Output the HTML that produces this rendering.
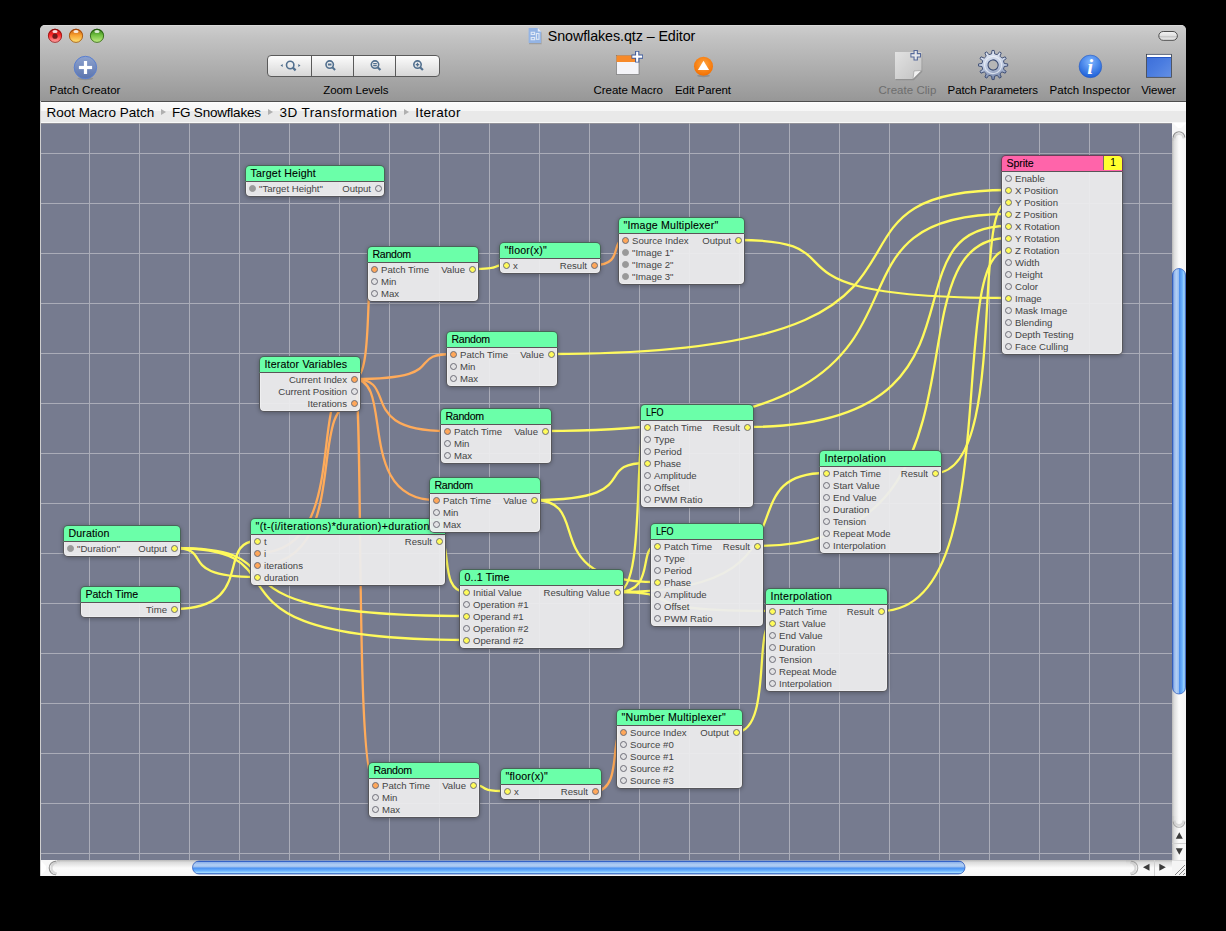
<!DOCTYPE html><html><head><meta charset="utf-8"><style>
*{margin:0;padding:0;box-sizing:border-box}
html,body{width:1226px;height:931px;overflow:hidden;background:#000;font-family:"Liberation Sans", sans-serif}
.win{position:absolute;left:40px;top:25px;width:1146px;height:851px;border-radius:5px 5px 0 0;overflow:hidden;background:#bdbdbd}
.tb{position:absolute;left:0;top:0;width:1146px;height:76px;background:linear-gradient(#e6e6e6 0px,#cdcdcd 1px,#c3c3c3 12px,#a9a9a9 50px,#979797 76px);border-bottom:0}
.tbl{position:absolute;left:0;top:76px;width:1146px;height:1px;background:#4e4e4e}
.bc{position:absolute;left:0;top:77px;width:1146px;height:21px;background:linear-gradient(#ffffff 0,#fafafa 2px,#f6f6f6 9px,#e9e9e9 9px,#e9e9e9 20px,#f8f8f8 20px)}
.bct{position:absolute;top:3px;font-size:13.5px;color:#000;white-space:nowrap;line-height:16px}
.arr{position:absolute;top:7px;width:0;height:0;border-left:5px solid #b0b0b0;border-top:3.5px solid transparent;border-bottom:3.5px solid transparent}
.cv{position:absolute;left:1px;top:98px;width:1131px;height:737px;background:#767b8f;overflow:hidden}
.pt{position:absolute;border-radius:5px;box-shadow:0 1px 4px rgba(0,0,0,.28);}
.hd{position:absolute;left:0;top:0;right:0;height:17px;border-radius:5px 5px 0 0;border:1px solid rgba(60,50,60,.75);border-bottom:1px solid #5a5458}
.hd span{position:absolute;left:4.5px;top:1px;font-size:10.6px;line-height:13px;color:#000;white-space:nowrap;-webkit-text-stroke:0.1px #000}
.bd{position:absolute;right:0;top:0;width:19px;height:14px;background:#ffff2e;border-left:1px solid #77705a;border-radius:0 4px 0 0;font-size:10px;text-align:center;line-height:14px;color:#000}
.bo{position:absolute;left:0;top:17px;right:0;bottom:0;background:rgba(236,236,237,.95);border-radius:0 0 5px 5px;border:1px solid rgba(60,60,66,.85);border-top:0;box-shadow:inset -1px -1px 0 rgba(255,255,255,.3),inset 1px 0 0 rgba(255,255,255,.35)}
.pc{position:absolute;width:7px;height:7px;border-radius:50%;border:1px solid #6e6e78}
.pc.y{background:#fffb5a} .pc.o{background:#ffa75a} .pc.g{background:#999;border-color:#999} .pc.w{background:#e2e2e4}
.pl,.pr{position:absolute;font-weight:normal;font-size:9.6px;line-height:14px;color:#444;white-space:nowrap}
.lbl{position:absolute;top:58px;font-size:11.4px;color:#000;white-space:nowrap;line-height:14px}
.hs{position:absolute;left:1px;top:835px;width:1131px;height:16px;background:linear-gradient(#c4c4c4,#e8e8e8 3px,#fafafa 10px,#f0f0f0 16px)}
.vs{position:absolute;left:1132px;top:98px;width:14px;height:737px;background:linear-gradient(90deg,#c4c4c4,#e8e8e8 3px,#fafafa 9px,#f0f0f0 14px)}
</style></head><body>
<div class="win">
<div class="tb"></div><div class="tbl"></div>

<svg width="1146" height="76" style="position:absolute;left:0;top:0">
 <defs>
  <radialGradient id="gr" cx="50%" cy="35%" r="60%"><stop offset="0" stop-color="#ff8a8a"/><stop offset="1" stop-color="#c81010"/></radialGradient>
  <radialGradient id="go" cx="50%" cy="35%" r="60%"><stop offset="0" stop-color="#ffe27a"/><stop offset="1" stop-color="#d8780c"/></radialGradient>
  <radialGradient id="gg" cx="50%" cy="35%" r="60%"><stop offset="0" stop-color="#c8f08a"/><stop offset="1" stop-color="#3e9a1a"/></radialGradient>
  <linearGradient id="pc" x1="0" y1="0" x2="0" y2="1"><stop offset="0" stop-color="#8ea3cf"/><stop offset="1" stop-color="#5b74ad"/></linearGradient>
  <linearGradient id="seg" x1="0" y1="0" x2="0" y2="1"><stop offset="0" stop-color="#fdfdfd"/><stop offset="1" stop-color="#d6d6d6"/></linearGradient>
  <radialGradient id="ep" cx="50%" cy="40%" r="60%"><stop offset="0" stop-color="#ffa640"/><stop offset="1" stop-color="#f46f00"/></radialGradient>
  <radialGradient id="inf" cx="50%" cy="30%" r="70%"><stop offset="0" stop-color="#7fb6ff"/><stop offset="1" stop-color="#1c5fd8"/></radialGradient>
  <linearGradient id="gear" x1="0" y1="0" x2="0" y2="1"><stop offset="0" stop-color="#e4eaf6"/><stop offset="0.6" stop-color="#b8c4dc"/><stop offset="1" stop-color="#7080a4"/></linearGradient>
  <linearGradient id="gr2" x1="0" y1="0" x2="0" y2="1"><stop offset="0" stop-color="#b01212"/><stop offset="0.45" stop-color="#ff2a2a"/><stop offset="1" stop-color="#ffb0b0"/></linearGradient>
  <linearGradient id="go2" x1="0" y1="0" x2="0" y2="1"><stop offset="0" stop-color="#c0500a"/><stop offset="0.45" stop-color="#f7a030"/><stop offset="1" stop-color="#ffe87a"/></linearGradient>
  <linearGradient id="gg2" x1="0" y1="0" x2="0" y2="1"><stop offset="0" stop-color="#2a7010"/><stop offset="0.45" stop-color="#70c040"/><stop offset="1" stop-color="#c8f08a"/></linearGradient>
 </defs>
 <g transform="translate(15,10.799999999999997)">
  <circle r="7" fill="url(#gr2)"/><circle r="6.6" fill="none" stroke="#7a0a0a" stroke-width="0.9" opacity=".8"/>
  <circle cy="0.4" r="2.6" fill="#6e1a1a"/>
  <ellipse cy="-4.3" rx="2.6" ry="1.5" fill="#fff" opacity=".85"/>
 </g>
 <g transform="translate(36,10.799999999999997)">
  <circle r="7" fill="url(#go2)"/><circle r="6.6" fill="none" stroke="#8a3a05" stroke-width="0.9" opacity=".8"/>
  <ellipse cy="-4.3" rx="2.6" ry="1.5" fill="#fff" opacity=".85"/>
 </g>
 <g transform="translate(57,10.799999999999997)">
  <circle r="7" fill="url(#gg2)"/><circle r="6.6" fill="none" stroke="#1a4a0a" stroke-width="0.9" opacity=".8"/>
  <ellipse cy="-4.3" rx="2.6" ry="1.5" fill="#fff" opacity=".8"/>
 </g>
 <defs><linearGradient id="pill" x1="0" y1="0" x2="0" y2="1"><stop offset="0" stop-color="#f4f4f4"/><stop offset="0.45" stop-color="#e2e2e2"/><stop offset="0.55" stop-color="#c8c8c8"/><stop offset="1" stop-color="#f6f6f6"/></linearGradient></defs>
 <rect x="1118.8" y="6.5" width="18.6" height="8.8" rx="4.4" fill="url(#pill)" stroke="#4e4e4e" stroke-width="1"/>
 <ellipse cx="45.400000000000006" cy="53.599999999999994" rx="8" ry="1.6" fill="#000" opacity=".12"/>
 <circle cx="45.400000000000006" cy="42.5" r="11.2" fill="url(#pc)" stroke="#5a7fd0" stroke-width="1"/>
 <rect x="43.9" y="36.0" width="3.2" height="13" fill="#fff"/>
 <rect x="38.9" y="40.9" width="13.2" height="3.2" fill="#fff"/>
 <rect x="227.5" y="30.5" width="172" height="21" rx="3.5" fill="url(#seg)" stroke="#5a5a5a" stroke-width="1"/>
 <path d="M271.5,30.5V51.5M313.5,30.5V51.5M355.5,30.5V51.5" stroke="#5a5a5a" stroke-width="1"/>
 <g fill="none" stroke="#52708f" stroke-width="1.6">
  <circle cx="250.2" cy="40" r="3.7"/><path d="M252.8,42.599999999999994l2.8,2.8" stroke-width="2.2"/>
  <circle cx="289.7" cy="39.599999999999994" r="3.7"/><path d="M292.3,42.2l2.8,2.8M287.9,39.599999999999994h3.6" stroke-width="2"/>
  <circle cx="335" cy="39.599999999999994" r="3.7"/><path d="M337.6,42.2l2.8,2.8" stroke-width="2.2"/><path d="M333.2,38.6h3.6M333.2,40.599999999999994h3.6" stroke-width="1.1"/>
  <circle cx="377.5" cy="39.599999999999994" r="3.7"/><path d="M380.1,42.2l2.8,2.8" stroke-width="2.2"/><path d="M375.7,39.599999999999994h3.6M377.5,37.8v3.6" stroke-width="1.4"/>
 </g>
 <path d="M240.5,40.5l2.2,-1.6v3.2z M260.5,40.5l-2.2,-1.6v3.2z" fill="#52708f"/>
 <rect x="576.5" y="30.5" width="22.5" height="19" fill="#f4f4f8" stroke="#6a6a6a" stroke-width="0.6"/>
 <rect x="576.5" y="30.5" width="22.5" height="6.5" fill="#f78a2a"/>
 <path d="M597.2,26v11.5M591.5,31.700000000000003h11.5" stroke="#3e5a9a" stroke-width="4.2"/>
 <path d="M597.2,26.799999999999997v9.9M592.3,31.700000000000003h9.9" stroke="#fff" stroke-width="2.2"/>
 <ellipse cx="663.5" cy="50.8" rx="6.5" ry="1.4" fill="#000" opacity=".14"/>
 <circle cx="663.5" cy="41.3" r="9.5" fill="url(#ep)"/>
 <path d="M663.5,35.7 L669.1,45 L657.9,45Z" fill="#fff"/>
 <defs><linearGradient id="pg" x1="0" y1="0" x2="1" y2="1"><stop offset="0" stop-color="#e2e2e2"/><stop offset="1" stop-color="#c2c2c2"/></linearGradient></defs>
 <path d="M855.5,28H882V46L873.5,54.5H855.5Z" fill="#6a6a6a" opacity=".35" transform="translate(0.3,0.8)"/>
 <path d="M855,27H881.5V45.5L873,54H855Z" fill="url(#pg)"/>
 <path d="M881.5,45.5L873,54L874,46Z" fill="#f2f2f2" stroke="#8a8a8a" stroke-width="0.5"/>
 <path d="M875.7,25v10.6M870.4,30.299999999999997h10.6" stroke="#56699a" stroke-width="4.4"/>
 <path d="M875.7,26v8.6M871.4,30.299999999999997h8.6" stroke="#e4e6ea" stroke-width="2.2"/>
 <g transform="translate(953.1,40) rotate(-7.8)">
  <path d="M11.20,0.00 L14.57,0.92 L14.28,3.04 L10.79,3.01 L9.70,5.60 L12.16,8.08 L10.85,9.77 L7.84,8.00 L5.60,9.70 L6.49,13.08 L4.51,13.89 L2.79,10.85 L0.00,11.20 L-0.92,14.57 L-3.04,14.28 L-3.01,10.79 L-5.60,9.70 L-8.08,12.16 L-9.77,10.85 L-8.00,7.84 L-9.70,5.60 L-13.08,6.49 L-13.89,4.51 L-10.85,2.79 L-11.20,0.00 L-14.57,-0.92 L-14.28,-3.04 L-10.79,-3.01 L-9.70,-5.60 L-12.16,-8.08 L-10.85,-9.77 L-7.84,-8.00 L-5.60,-9.70 L-6.49,-13.08 L-4.51,-13.89 L-2.79,-10.85 L-0.00,-11.20 L0.92,-14.57 L3.04,-14.28 L3.01,-10.79 L5.60,-9.70 L8.08,-12.16 L9.77,-10.85 L8.00,-7.84 L9.70,-5.60 L13.08,-6.49 L13.89,-4.51 L10.85,-2.79Z" fill="url(#gear)" stroke="#3e4e74" stroke-width="0.9"/>
  <circle r="8.6" fill="none" stroke="#eef2fa" stroke-width="1.2" opacity=".7"/>
  <circle r="5.1" fill="#b6b6b6" stroke="#3e4e74" stroke-width="1.1"/>
 </g>
 <circle cx="1050.4" cy="41.400000000000006" r="11.3" fill="url(#inf)" stroke="#2a5cc0" stroke-width="0.6"/>
 <text x="1050.2" y="48.8" text-anchor="middle" font-family="Liberation Serif" font-style="italic" font-weight="bold" font-size="21" fill="#fff">i</text>
 <defs><linearGradient id="vw" x1="0" y1="0" x2="1" y2="1"><stop offset="0" stop-color="#3a6cd8"/><stop offset="0.5" stop-color="#4a7ce0"/><stop offset="1" stop-color="#6490e4"/></linearGradient></defs>
 <rect x="1106.5" y="29.299999999999997" width="25" height="23" fill="url(#vw)" stroke="#3a3a3a" stroke-width="0.7"/>
 <rect x="1107" y="29.799999999999997" width="24" height="2.2" fill="#fff"/>
 <rect x="1107" y="32" width="24" height="0.8" fill="#1f4fc0"/>
 <g transform="translate(488.6,3.1000000000000014)">
  <path d="M0.5,15.5 H13 V4 L9.5,0.5 H0.5Z" fill="#7f7f7f" opacity=".5" transform="translate(0,0.6)"/>
  <path d="M0,0 H9.2 L12.5,3.3 V15 H0Z" fill="#94b4e4"/>
  <path d="M9.2,0 L12.5,3.3 H9.2Z" fill="#e8eef8"/>
  <g fill="none" stroke="#dfe8f6" stroke-width="1.1">
   <rect x="2.6" y="4.2" width="3.4" height="2.2"/><rect x="2.6" y="9.4" width="3.4" height="2.2"/><rect x="7.8" y="5.4" width="2.6" height="5.8"/>
  </g>
 </g>
</svg>
<div class="lbl" style="left:9.5px;font-size:11.5px;letter-spacing:-0.004px;color:#000">Patch Creator</div>
<div class="lbl" style="left:283.2px;font-size:11.5px;letter-spacing:-0.043px;color:#000">Zoom Levels</div>
<div class="lbl" style="left:553.5px;font-size:11.5px;letter-spacing:-0.015px;color:#000">Create Macro</div>
<div class="lbl" style="left:635.0px;font-size:11.5px;letter-spacing:-0.089px;color:#000">Edit Parent</div>
<div class="lbl" style="left:838.5px;font-size:11.5px;letter-spacing:0.028px;color:#6e6e6e">Create Clip</div>
<div class="lbl" style="left:907.6px;font-size:11.5px;letter-spacing:-0.109px;color:#000">Patch Parameters</div>
<div class="lbl" style="left:1009.5px;font-size:11.5px;letter-spacing:0.071px;color:#000">Patch Inspector</div>
<div class="lbl" style="left:1101.2px;font-size:11.5px;letter-spacing:-0.069px;color:#000">Viewer</div>
<div style="position:absolute;left:507.8px;top:3px;font-size:14.3px;letter-spacing:-0.086px;line-height:16px;color:#000;white-space:nowrap">Snowflakes.qtz – Editor</div>

<div class="bc"><div class="bct" style="left:6.5px;letter-spacing:-0.023px">Root Macro Patch</div>
<div class="arr" style="left:120.6px"></div>
<div class="bct" style="left:132.0px;letter-spacing:-0.211px">FG Snowflakes</div>
<div class="arr" style="left:227.8px"></div>
<div class="bct" style="left:239.6px;letter-spacing:0.401px">3D Transformation</div>
<div class="arr" style="left:363.8px"></div>
<div class="bct" style="left:375.3px;letter-spacing:0.333px">Iterator</div></div>
<div class="cv">
<svg width="1131" height="737" viewBox="41 123 1131 737" style="position:absolute;left:0;top:0">
<path d="M89.5,123V860M139.5,123V860M189.5,123V860M239.5,123V860M289.5,123V860M339.5,123V860M389.5,123V860M439.5,123V860M489.5,123V860M539.5,123V860M589.5,123V860M639.5,123V860M689.5,123V860M739.5,123V860M789.5,123V860M839.5,123V860M889.5,123V860M939.5,123V860M989.5,123V860M1039.5,123V860M1089.5,123V860M1139.5,123V860M41,153.5H1172M41,203.5H1172M41,253.5H1172M41,303.5H1172M41,353.5H1172M41,403.5H1172M41,453.5H1172M41,503.5H1172M41,553.5H1172M41,603.5H1172M41,653.5H1172M41,703.5H1172M41,753.5H1172M41,803.5H1172M41,853.5H1172" stroke="#aaacb8" stroke-width="1" fill="none"/>
<path d="M354,379 C374.0,379 364.0,269 374,269" stroke="#ffab5a" stroke-width="2.3" fill="none"/>
<path d="M354,379 C453.0,379 403.5,354 453,354" stroke="#ffab5a" stroke-width="2.3" fill="none"/>
<path d="M354,379 C400.5,379 354.0,431 447,431" stroke="#ffab5a" stroke-width="2.3" fill="none"/>
<path d="M354,379 C395.0,379 354.0,500 436,500" stroke="#ffab5a" stroke-width="2.3" fill="none"/>
<path d="M354,379 C364.5,379 354.0,785 375,785" stroke="#ffab5a" stroke-width="2.3" fill="none"/>
<path d="M354,379 C305.5,379 354.0,553 257,553" stroke="#ffab5a" stroke-width="2.3" fill="none"/>
<path d="M354,403 C305.5,403 354.0,565 257,565" stroke="#ffab5a" stroke-width="2.3" fill="none"/>
<path d="M594,265 C625.0,265 609.5,240 625,240" stroke="#ffab5a" stroke-width="2.3" fill="none"/>
<path d="M595,791 C623.0,791 609.0,732 623,732" stroke="#ffab5a" stroke-width="2.3" fill="none"/>
<path d="M472,269 C506.0,269 489.0,265 506,265" stroke="#fffa5c" stroke-width="2.3" fill="none"/>
<path d="M738,240 C873.0,240 738.0,298 1008,298" stroke="#fffa5c" stroke-width="2.3" fill="none"/>
<path d="M551,354 C1008.0,354 779.5,190 1008,190" stroke="#fffa5c" stroke-width="2.3" fill="none"/>
<path d="M545,431 C1008.0,431 776.5,214 1008,214" stroke="#fffa5c" stroke-width="2.3" fill="none"/>
<path d="M534,500 C647.0,500 590.5,463 647,463" stroke="#fffa5c" stroke-width="2.3" fill="none"/>
<path d="M534,500 C595.5,500 534.0,582 657,582" stroke="#fffa5c" stroke-width="2.3" fill="none"/>
<path d="M174,548 C215.5,548 174.0,577 257,577" stroke="#fffa5c" stroke-width="2.3" fill="none"/>
<path d="M174,548 C320.0,548 174.0,616 466,616" stroke="#fffa5c" stroke-width="2.3" fill="none"/>
<path d="M174,548 C320.0,548 174.0,640 466,640" stroke="#fffa5c" stroke-width="2.3" fill="none"/>
<path d="M174,609 C257.0,609 215.5,541 257,541" stroke="#fffa5c" stroke-width="2.3" fill="none"/>
<path d="M439,541 C452.5,541 439.0,592 466,592" stroke="#fffa5c" stroke-width="2.3" fill="none"/>
<path d="M617,592 C647.0,592 632.0,427 647,427" stroke="#fffa5c" stroke-width="2.3" fill="none"/>
<path d="M617,592 C657.0,592 637.0,546 657,546" stroke="#fffa5c" stroke-width="2.3" fill="none"/>
<path d="M617,592 C826.0,592 721.5,473 826,473" stroke="#fffa5c" stroke-width="2.3" fill="none"/>
<path d="M617,592 C694.5,592 617.0,611 772,611" stroke="#fffa5c" stroke-width="2.3" fill="none"/>
<path d="M747,427 C1008.0,427 877.5,226 1008,226" stroke="#fffa5c" stroke-width="2.3" fill="none"/>
<path d="M757,546 C1008.0,546 882.5,238 1008,238" stroke="#fffa5c" stroke-width="2.3" fill="none"/>
<path d="M935,473 C1008.0,473 971.5,202 1008,202" stroke="#fffa5c" stroke-width="2.3" fill="none"/>
<path d="M881,611 C1008.0,611 944.5,250 1008,250" stroke="#fffa5c" stroke-width="2.3" fill="none"/>
<path d="M736,732 C772.0,732 754.0,623 772,623" stroke="#fffa5c" stroke-width="2.3" fill="none"/>
<path d="M473,785 C490.0,785 473.0,791 507,791" stroke="#fffa5c" stroke-width="2.3" fill="none"/>
</svg>
<div style="position:absolute;left:0;top:0;width:1131px;height:1px;background:rgba(165,162,160,.6)"></div>
<div class="pt" style="left:204px;top:42px;width:140px;height:32px"><div class="hd" style="background:#6bffa9"><span style="letter-spacing:0.191px">Target Height</span></div><div class="bo"></div><i class="pc g" style="left:3.5px;top:19.5px"></i><b class="pl" style="left:14px;top:17px">&quot;Target Height&quot;</b><i class="pc w" style="left:129.5px;top:19.5px"></i><b class="pr" style="right:14px;top:17px">Output</b></div>
<div class="pt" style="left:209px;top:395px;width:196px;height:68px"><div class="hd" style="background:#6bffa9"><span style="letter-spacing:0.398px">&quot;(t-(i/iterations)*duration)+duration&quot;</span></div><div class="bo"></div><i class="pc y" style="left:3.5px;top:19.5px"></i><b class="pl" style="left:14px;top:17px">t</b><i class="pc o" style="left:3.5px;top:31.5px"></i><b class="pl" style="left:14px;top:29px">i</b><i class="pc o" style="left:3.5px;top:43.5px"></i><b class="pl" style="left:14px;top:41px">iterations</b><i class="pc y" style="left:3.5px;top:55.5px"></i><b class="pl" style="left:14px;top:53px">duration</b><i class="pc y" style="left:185.5px;top:19.5px"></i><b class="pr" style="right:14px;top:17px">Result</b></div>
<div class="pt" style="left:326px;top:123px;width:112px;height:56px"><div class="hd" style="background:#6bffa9"><span style="letter-spacing:-0.288px">Random</span></div><div class="bo"></div><i class="pc o" style="left:3.5px;top:19.5px"></i><b class="pl" style="left:14px;top:17px">Patch Time</b><i class="pc w" style="left:3.5px;top:31.5px"></i><b class="pl" style="left:14px;top:29px">Min</b><i class="pc w" style="left:3.5px;top:43.5px"></i><b class="pl" style="left:14px;top:41px">Max</b><i class="pc y" style="left:101.5px;top:19.5px"></i><b class="pr" style="right:14px;top:17px">Value</b></div>
<div class="pt" style="left:458px;top:119px;width:102px;height:32px"><div class="hd" style="background:#6bffa9"><span style="letter-spacing:0.202px">&quot;floor(x)&quot;</span></div><div class="bo"></div><i class="pc y" style="left:3.5px;top:19.5px"></i><b class="pl" style="left:14px;top:17px">x</b><i class="pc o" style="left:91.5px;top:19.5px"></i><b class="pr" style="right:14px;top:17px">Result</b></div>
<div class="pt" style="left:577px;top:94px;width:127px;height:68px"><div class="hd" style="background:#6bffa9"><span style="letter-spacing:0.198px">&quot;Image Multiplexer&quot;</span></div><div class="bo"></div><i class="pc o" style="left:3.5px;top:19.5px"></i><b class="pl" style="left:14px;top:17px">Source Index</b><i class="pc g" style="left:3.5px;top:31.5px"></i><b class="pl" style="left:14px;top:29px">&quot;Image 1&quot;</b><i class="pc g" style="left:3.5px;top:43.5px"></i><b class="pl" style="left:14px;top:41px">&quot;Image 2&quot;</b><i class="pc g" style="left:3.5px;top:55.5px"></i><b class="pl" style="left:14px;top:53px">&quot;Image 3&quot;</b><i class="pc y" style="left:116.5px;top:19.5px"></i><b class="pr" style="right:14px;top:17px">Output</b></div>
<div class="pt" style="left:405px;top:208px;width:112px;height:56px"><div class="hd" style="background:#6bffa9"><span style="letter-spacing:-0.288px">Random</span></div><div class="bo"></div><i class="pc o" style="left:3.5px;top:19.5px"></i><b class="pl" style="left:14px;top:17px">Patch Time</b><i class="pc w" style="left:3.5px;top:31.5px"></i><b class="pl" style="left:14px;top:29px">Min</b><i class="pc w" style="left:3.5px;top:43.5px"></i><b class="pl" style="left:14px;top:41px">Max</b><i class="pc y" style="left:101.5px;top:19.5px"></i><b class="pr" style="right:14px;top:17px">Value</b></div>
<div class="pt" style="left:218px;top:233px;width:102px;height:56px"><div class="hd" style="background:#6bffa9"><span style="letter-spacing:0.154px">Iterator Variables</span></div><div class="bo"></div><i class="pc o" style="left:91.5px;top:19.5px"></i><b class="pr" style="right:14px;top:17px">Current Index</b><i class="pc w" style="left:91.5px;top:31.5px"></i><b class="pr" style="right:14px;top:29px">Current Position</b><i class="pc o" style="left:91.5px;top:43.5px"></i><b class="pr" style="right:14px;top:41px">Iterations</b></div>
<div class="pt" style="left:399px;top:285px;width:112px;height:56px"><div class="hd" style="background:#6bffa9"><span style="letter-spacing:-0.288px">Random</span></div><div class="bo"></div><i class="pc o" style="left:3.5px;top:19.5px"></i><b class="pl" style="left:14px;top:17px">Patch Time</b><i class="pc w" style="left:3.5px;top:31.5px"></i><b class="pl" style="left:14px;top:29px">Min</b><i class="pc w" style="left:3.5px;top:43.5px"></i><b class="pl" style="left:14px;top:41px">Max</b><i class="pc y" style="left:101.5px;top:19.5px"></i><b class="pr" style="right:14px;top:17px">Value</b></div>
<div class="pt" style="left:599px;top:281px;width:114px;height:104px"><div class="hd" style="background:#6bffa9"><span style="transform:scaleX(0.854);transform-origin:0 0">LFO</span></div><div class="bo"></div><i class="pc y" style="left:3.5px;top:19.5px"></i><b class="pl" style="left:14px;top:17px">Patch Time</b><i class="pc w" style="left:3.5px;top:31.5px"></i><b class="pl" style="left:14px;top:29px">Type</b><i class="pc w" style="left:3.5px;top:43.5px"></i><b class="pl" style="left:14px;top:41px">Period</b><i class="pc y" style="left:3.5px;top:55.5px"></i><b class="pl" style="left:14px;top:53px">Phase</b><i class="pc w" style="left:3.5px;top:67.5px"></i><b class="pl" style="left:14px;top:65px">Amplitude</b><i class="pc w" style="left:3.5px;top:79.5px"></i><b class="pl" style="left:14px;top:77px">Offset</b><i class="pc w" style="left:3.5px;top:91.5px"></i><b class="pl" style="left:14px;top:89px">PWM Ratio</b><i class="pc y" style="left:103.5px;top:19.5px"></i><b class="pr" style="right:14px;top:17px">Result</b></div>
<div class="pt" style="left:388px;top:354px;width:112px;height:56px"><div class="hd" style="background:#6bffa9"><span style="letter-spacing:-0.288px">Random</span></div><div class="bo"></div><i class="pc o" style="left:3.5px;top:19.5px"></i><b class="pl" style="left:14px;top:17px">Patch Time</b><i class="pc w" style="left:3.5px;top:31.5px"></i><b class="pl" style="left:14px;top:29px">Min</b><i class="pc w" style="left:3.5px;top:43.5px"></i><b class="pl" style="left:14px;top:41px">Max</b><i class="pc y" style="left:101.5px;top:19.5px"></i><b class="pr" style="right:14px;top:17px">Value</b></div>
<div class="pt" style="left:22px;top:402px;width:118px;height:32px"><div class="hd" style="background:#6bffa9"><span style="letter-spacing:0.137px">Duration</span></div><div class="bo"></div><i class="pc g" style="left:3.5px;top:19.5px"></i><b class="pl" style="left:14px;top:17px">&quot;Duration&quot;</b><i class="pc y" style="left:107.5px;top:19.5px"></i><b class="pr" style="right:14px;top:17px">Output</b></div>
<div class="pt" style="left:39px;top:463px;width:101px;height:32px"><div class="hd" style="background:#6bffa9"><span style="letter-spacing:-0.042px">Patch Time</span></div><div class="bo"></div><i class="pc y" style="left:90.5px;top:19.5px"></i><b class="pr" style="right:14px;top:17px">Time</b></div>
<div class="pt" style="left:418px;top:446px;width:165px;height:80px"><div class="hd" style="background:#6bffa9"><span style="letter-spacing:0.155px">0..1 Time</span></div><div class="bo"></div><i class="pc y" style="left:3.5px;top:19.5px"></i><b class="pl" style="left:14px;top:17px">Initial Value</b><i class="pc w" style="left:3.5px;top:31.5px"></i><b class="pl" style="left:14px;top:29px">Operation #1</b><i class="pc y" style="left:3.5px;top:43.5px"></i><b class="pl" style="left:14px;top:41px">Operand #1</b><i class="pc w" style="left:3.5px;top:55.5px"></i><b class="pl" style="left:14px;top:53px">Operation #2</b><i class="pc y" style="left:3.5px;top:67.5px"></i><b class="pl" style="left:14px;top:65px">Operand #2</b><i class="pc y" style="left:154.5px;top:19.5px"></i><b class="pr" style="right:14px;top:17px">Resulting Value</b></div>
<div class="pt" style="left:609px;top:400px;width:114px;height:104px"><div class="hd" style="background:#6bffa9"><span style="transform:scaleX(0.854);transform-origin:0 0">LFO</span></div><div class="bo"></div><i class="pc y" style="left:3.5px;top:19.5px"></i><b class="pl" style="left:14px;top:17px">Patch Time</b><i class="pc w" style="left:3.5px;top:31.5px"></i><b class="pl" style="left:14px;top:29px">Type</b><i class="pc w" style="left:3.5px;top:43.5px"></i><b class="pl" style="left:14px;top:41px">Period</b><i class="pc y" style="left:3.5px;top:55.5px"></i><b class="pl" style="left:14px;top:53px">Phase</b><i class="pc w" style="left:3.5px;top:67.5px"></i><b class="pl" style="left:14px;top:65px">Amplitude</b><i class="pc w" style="left:3.5px;top:79.5px"></i><b class="pl" style="left:14px;top:77px">Offset</b><i class="pc w" style="left:3.5px;top:91.5px"></i><b class="pl" style="left:14px;top:89px">PWM Ratio</b><i class="pc y" style="left:103.5px;top:19.5px"></i><b class="pr" style="right:14px;top:17px">Result</b></div>
<div class="pt" style="left:778px;top:327px;width:123px;height:104px"><div class="hd" style="background:#6bffa9"><span style="letter-spacing:0.266px">Interpolation</span></div><div class="bo"></div><i class="pc y" style="left:3.5px;top:19.5px"></i><b class="pl" style="left:14px;top:17px">Patch Time</b><i class="pc w" style="left:3.5px;top:31.5px"></i><b class="pl" style="left:14px;top:29px">Start Value</b><i class="pc w" style="left:3.5px;top:43.5px"></i><b class="pl" style="left:14px;top:41px">End Value</b><i class="pc w" style="left:3.5px;top:55.5px"></i><b class="pl" style="left:14px;top:53px">Duration</b><i class="pc w" style="left:3.5px;top:67.5px"></i><b class="pl" style="left:14px;top:65px">Tension</b><i class="pc w" style="left:3.5px;top:79.5px"></i><b class="pl" style="left:14px;top:77px">Repeat Mode</b><i class="pc w" style="left:3.5px;top:91.5px"></i><b class="pl" style="left:14px;top:89px">Interpolation</b><i class="pc y" style="left:112.5px;top:19.5px"></i><b class="pr" style="right:14px;top:17px">Result</b></div>
<div class="pt" style="left:724px;top:465px;width:123px;height:104px"><div class="hd" style="background:#6bffa9"><span style="letter-spacing:0.266px">Interpolation</span></div><div class="bo"></div><i class="pc y" style="left:3.5px;top:19.5px"></i><b class="pl" style="left:14px;top:17px">Patch Time</b><i class="pc y" style="left:3.5px;top:31.5px"></i><b class="pl" style="left:14px;top:29px">Start Value</b><i class="pc w" style="left:3.5px;top:43.5px"></i><b class="pl" style="left:14px;top:41px">End Value</b><i class="pc w" style="left:3.5px;top:55.5px"></i><b class="pl" style="left:14px;top:53px">Duration</b><i class="pc w" style="left:3.5px;top:67.5px"></i><b class="pl" style="left:14px;top:65px">Tension</b><i class="pc w" style="left:3.5px;top:79.5px"></i><b class="pl" style="left:14px;top:77px">Repeat Mode</b><i class="pc w" style="left:3.5px;top:91.5px"></i><b class="pl" style="left:14px;top:89px">Interpolation</b><i class="pc y" style="left:112.5px;top:19.5px"></i><b class="pr" style="right:14px;top:17px">Result</b></div>
<div class="pt" style="left:575px;top:586px;width:127px;height:80px"><div class="hd" style="background:#6bffa9"><span style="letter-spacing:0.260px">&quot;Number Multiplexer&quot;</span></div><div class="bo"></div><i class="pc o" style="left:3.5px;top:19.5px"></i><b class="pl" style="left:14px;top:17px">Source Index</b><i class="pc w" style="left:3.5px;top:31.5px"></i><b class="pl" style="left:14px;top:29px">Source #0</b><i class="pc w" style="left:3.5px;top:43.5px"></i><b class="pl" style="left:14px;top:41px">Source #1</b><i class="pc w" style="left:3.5px;top:55.5px"></i><b class="pl" style="left:14px;top:53px">Source #2</b><i class="pc w" style="left:3.5px;top:67.5px"></i><b class="pl" style="left:14px;top:65px">Source #3</b><i class="pc y" style="left:116.5px;top:19.5px"></i><b class="pr" style="right:14px;top:17px">Output</b></div>
<div class="pt" style="left:327px;top:639px;width:112px;height:56px"><div class="hd" style="background:#6bffa9"><span style="letter-spacing:-0.288px">Random</span></div><div class="bo"></div><i class="pc o" style="left:3.5px;top:19.5px"></i><b class="pl" style="left:14px;top:17px">Patch Time</b><i class="pc w" style="left:3.5px;top:31.5px"></i><b class="pl" style="left:14px;top:29px">Min</b><i class="pc w" style="left:3.5px;top:43.5px"></i><b class="pl" style="left:14px;top:41px">Max</b><i class="pc y" style="left:101.5px;top:19.5px"></i><b class="pr" style="right:14px;top:17px">Value</b></div>
<div class="pt" style="left:459px;top:645px;width:102px;height:32px"><div class="hd" style="background:#6bffa9"><span style="letter-spacing:0.202px">&quot;floor(x)&quot;</span></div><div class="bo"></div><i class="pc y" style="left:3.5px;top:19.5px"></i><b class="pl" style="left:14px;top:17px">x</b><i class="pc o" style="left:91.5px;top:19.5px"></i><b class="pr" style="right:14px;top:17px">Result</b></div>
<div class="pt" style="left:960px;top:32px;width:122px;height:200px"><div class="hd" style="background:#ff64aa"><span style="letter-spacing:-0.095px">Sprite</span><div class="bd">1</div></div><div class="bo"></div><i class="pc w" style="left:3.5px;top:19.5px"></i><b class="pl" style="left:14px;top:17px">Enable</b><i class="pc y" style="left:3.5px;top:31.5px"></i><b class="pl" style="left:14px;top:29px">X Position</b><i class="pc y" style="left:3.5px;top:43.5px"></i><b class="pl" style="left:14px;top:41px">Y Position</b><i class="pc y" style="left:3.5px;top:55.5px"></i><b class="pl" style="left:14px;top:53px">Z Position</b><i class="pc y" style="left:3.5px;top:67.5px"></i><b class="pl" style="left:14px;top:65px">X Rotation</b><i class="pc y" style="left:3.5px;top:79.5px"></i><b class="pl" style="left:14px;top:77px">Y Rotation</b><i class="pc y" style="left:3.5px;top:91.5px"></i><b class="pl" style="left:14px;top:89px">Z Rotation</b><i class="pc w" style="left:3.5px;top:103.5px"></i><b class="pl" style="left:14px;top:101px">Width</b><i class="pc w" style="left:3.5px;top:115.5px"></i><b class="pl" style="left:14px;top:113px">Height</b><i class="pc w" style="left:3.5px;top:127.5px"></i><b class="pl" style="left:14px;top:125px">Color</b><i class="pc y" style="left:3.5px;top:139.5px"></i><b class="pl" style="left:14px;top:137px">Image</b><i class="pc w" style="left:3.5px;top:151.5px"></i><b class="pl" style="left:14px;top:149px">Mask Image</b><i class="pc w" style="left:3.5px;top:163.5px"></i><b class="pl" style="left:14px;top:161px">Blending</b><i class="pc w" style="left:3.5px;top:175.5px"></i><b class="pl" style="left:14px;top:173px">Depth Testing</b><i class="pc w" style="left:3.5px;top:187.5px"></i><b class="pl" style="left:14px;top:185px">Face Culling</b></div>
</div>

<svg width="1146" height="851" viewBox="40 25 1146 851" style="position:absolute;left:0;top:0;pointer-events:none">
 <defs>
  <linearGradient id="trh" x1="0" y1="0" x2="0" y2="1"><stop offset="0" stop-color="#b8b8b8"/><stop offset="0.15" stop-color="#dcdcdc"/><stop offset="0.5" stop-color="#fbfbfb"/><stop offset="1" stop-color="#f4f4f4"/></linearGradient>
  <linearGradient id="trv" x1="0" y1="0" x2="1" y2="0"><stop offset="0" stop-color="#b8b8b8"/><stop offset="0.15" stop-color="#dcdcdc"/><stop offset="0.5" stop-color="#fbfbfb"/><stop offset="1" stop-color="#f4f4f4"/></linearGradient>
  <linearGradient id="thh" x1="0" y1="0" x2="0" y2="1">
   <stop offset="0" stop-color="#1346c0"/><stop offset="0.1" stop-color="#8fb2ea"/><stop offset="0.3" stop-color="#b2cff4"/><stop offset="0.48" stop-color="#98bdf0"/><stop offset="0.52" stop-color="#4a8ff0"/><stop offset="0.75" stop-color="#6ab2ff"/><stop offset="0.9" stop-color="#a4dcff"/><stop offset="1" stop-color="#3a6ac8"/></linearGradient>
  <linearGradient id="thv" x1="0" y1="0" x2="1" y2="0">
   <stop offset="0" stop-color="#1346c0"/><stop offset="0.1" stop-color="#8fb2ea"/><stop offset="0.3" stop-color="#b2cff4"/><stop offset="0.48" stop-color="#98bdf0"/><stop offset="0.52" stop-color="#4a8ff0"/><stop offset="0.75" stop-color="#6ab2ff"/><stop offset="0.9" stop-color="#a4dcff"/><stop offset="1" stop-color="#3a6ac8"/></linearGradient>
  <radialGradient id="caph" cx="0" cy="0.5" r="1"><stop offset="0.55" stop-color="#fdfdfd"/><stop offset="0.85" stop-color="#cfcfcf"/><stop offset="1" stop-color="#8a8a8a"/></radialGradient>
 </defs>
 <!-- horizontal scrollbar -->
 <rect x="41" y="860" width="1131" height="16" fill="url(#trh)"/>
 <rect x="41" y="860" width="16" height="16" fill="#f7f7f7"/>
 <path d="M41,861 L46,866 L46,870 L41,875Z" fill="#fff"/>
 <path d="M57,860.5 A7.5,7.5 0 0 0 57,875.5 H60 V860.5Z" fill="url(#trh)"/>
 <path d="M56,861.2 A6.8,6.8 0 0 0 56,874.8" fill="none" stroke="#7a7a7a" stroke-width="1.1" opacity=".8"/>
 <path d="M57,862.5 A5.5,5.5 0 0 0 57,873.5" fill="none" stroke="#c4c4c4" stroke-width="2.2" opacity=".6"/>
 <path d="M1131,860.5 A7.5,7.5 0 0 1 1131,875.5 H1126 V860.5Z" fill="url(#trh)"/>
 <path d="M1131,861.2 A6.8,6.8 0 0 1 1131,874.8" fill="none" stroke="#8a8a8a" stroke-width="1.1" opacity=".7"/>
 <path d="M1130,862.5 A5.5,5.5 0 0 1 1130,873.5" fill="none" stroke="#c4c4c4" stroke-width="2.2" opacity=".6"/>
 <rect x="1139" y="860" width="33" height="16" fill="url(#trh)"/>
 <path d="M1154.5,860V876" stroke="#d0d0d0" stroke-width="1"/>
 <path d="M1143,867.3 L1149.5,863.8 L1149.5,870.8Z" fill="#3a3a3a"/>
 <path d="M1165.8,867.3 L1159.3,863.8 L1159.3,870.8Z" fill="#3a3a3a"/>
 <!-- vertical scrollbar -->
 <rect x="1172" y="123" width="14" height="737" fill="url(#trv)"/>
 <rect x="1172" y="123" width="14" height="15" fill="#f7f7f7"/>
 <path d="M1173,123 L1178,128 L1181,128 L1186,123Z" fill="#fff"/>
 <path d="M1172.5,138 A6.5,6.5 0 0 1 1185.5,138 V141 H1172.5Z" fill="url(#trv)"/>
 <path d="M1173.2,137.5 A5.8,5.8 0 0 1 1184.8,137.5" fill="none" stroke="#7a7a7a" stroke-width="1.1" opacity=".8"/>
 <path d="M1174.5,138.5 A4.5,4.5 0 0 1 1183.5,138.5" fill="none" stroke="#c4c4c4" stroke-width="2.2" opacity=".6"/>
 <path d="M1172.5,821 A6.5,6.5 0 0 0 1185.5,821 V816 H1172.5Z" fill="url(#trv)"/>
 <path d="M1173.2,821.5 A5.8,5.8 0 0 0 1184.8,821.5" fill="none" stroke="#8a8a8a" stroke-width="1.1" opacity=".7"/>
 <path d="M1174.5,820.5 A4.5,4.5 0 0 0 1183.5,820.5" fill="none" stroke="#c4c4c4" stroke-width="2.2" opacity=".6"/>
 <rect x="1172" y="828" width="14" height="32" fill="url(#trv)"/>
 <path d="M1172,843.5H1186" stroke="#d0d0d0" stroke-width="1"/>
 <path d="M1179.3,832.3 L1182.8,838.8 L1175.8,838.8Z" fill="#3a3a3a"/>
 <path d="M1179.3,854.8 L1182.8,848.3 L1175.8,848.3Z" fill="#3a3a3a"/>
 <!-- resize corner -->
 <rect x="1172" y="860" width="14" height="16" fill="#f4f4f4"/>
 <path d="M1175,875 L1185,865 M1179,875 L1185,869 M1183,875 L1185,873" stroke="#777" stroke-width="0.9"/>
 <path d="M1172,860.5H1186" stroke="#dcdcdc" stroke-width="1"/>
 <!-- thumbs -->
 <rect x="192.5" y="861" width="772.5" height="13" rx="6.5" fill="url(#thh)" stroke="#1d4cb4" stroke-width="0.9" stroke-opacity=".75"/>
 <rect x="1172.5" y="268.5" width="13" height="425.5" rx="6.5" fill="url(#thv)" stroke="#1d4cb4" stroke-width="0.9" stroke-opacity=".75"/>
 <rect x="40" y="101" width="1" height="775" fill="#cfcfcf"/>
</svg>

</div></body></html>
